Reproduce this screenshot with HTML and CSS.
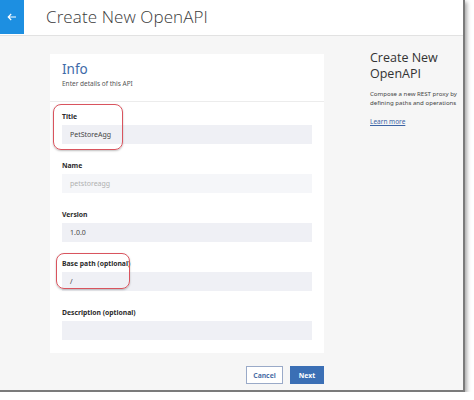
FILE: index.html
```html
<!DOCTYPE html>
<html>
<head>
<meta charset="utf-8">
<link rel="stylesheet" href="styles.css">
</head>
<body>
<div class="window">
  <header class="header">
    <div class="back">
      <svg width="10" height="8" viewBox="0 0 10 8"><path d="M9 4H1.5M4.2 1L1.2 4l3 3" fill="none" stroke="#fff" stroke-width="1.1"/></svg>
    </div>
    <h1 class="page-title">Create New OpenAPI</h1>
  </header>
  <main class="main">
    <section class="left">
      <div class="card">
        <div class="card-head">
          <h2 class="card-title">Info</h2>
          <p class="card-sub">Enter details of this API</p>
        </div>
        <div class="card-body">
          <div class="field">
            <label class="label">Title</label>
            <div class="input">PetStoreAgg</div>
            <span class="mark mark-title"></span>
          </div>
          <div class="field">
            <label class="label">Name</label>
            <div class="input input-disabled">petstoreagg</div>
          </div>
          <div class="field">
            <label class="label">Version</label>
            <div class="input">1.0.0</div>
          </div>
          <div class="field">
            <label class="label">Base path (optional)</label>
            <div class="input">/</div>
            <span class="mark mark-base"></span>
          </div>
          <div class="field">
            <label class="label">Description (optional)</label>
            <div class="input"></div>
          </div>
        </div>
      </div>
      <div class="actions">
        <button class="btn btn-secondary">Cancel</button>
        <button class="btn btn-primary">Next</button>
      </div>
    </section>
    <aside class="side">
      <h3 class="side-title">Create New OpenAPI</h3>
      <p class="side-text">Compose a new REST proxy by defining paths and operations</p>
      <a class="side-link">Learn more</a>
    </aside>
  </main>
</div>
</body>
</html>
```

FILE: styles.css
```css
* { box-sizing: border-box; }
html, body { margin: 0; padding: 0; background: #fff; }
body { font-family: "Noto Sans", "Open Sans", sans-serif; color: #333; }

.window {
  width: 465px;
  height: 392px;
  background: #f6f6f6;
  border-right: 2px solid #7b7b7b;
  border-bottom: 2px solid #7b7b7b;
  box-shadow: 2px 2px 4px rgba(0,0,0,0.35);
  display: flex;
  flex-direction: column;
  overflow: hidden;
}

.header {
  height: 36px;
  flex: none;
  background: #fff;
  border-bottom: 1px solid #e2e2e2;
  display: flex;
  align-items: stretch;
}
.back {
  width: 24px;
  background: #1d8fe1;
  display: flex;
  align-items: center;
  justify-content: center;
  margin-bottom: 1px;
}
.page-title {
  margin: 0 0 0 22px;
  align-self: center;
  font-family: "Open Sans", sans-serif;
  font-weight: 300;
  font-size: 17px;
  color: #3a3a3a;
  letter-spacing: 0.1px;
  padding-bottom: 3px;
}

.main {
  display: flex;
  padding: 18px 0 0 50px;
}
.left { width: 274px; flex: none; }
.card { background: #fff; }
.card-head {
  height: 48px;
  padding: 6px 12px 0;
  border-bottom: 1px solid #ececec;
}
.card-title {
  margin: 0;
  font-weight: 400;
  font-size: 13.5px;
  line-height: 18px;
  color: #3e6aa8;
}
.card-sub {
  margin: 1px 0 0;
  font-size: 6.5px;
  color: #555;
}
.card-body { padding: 10px 12px 13px; }
.field { position: relative; margin-bottom: 17px; }
.field:last-child { margin-bottom: 0; }
.label {
  display: block;
  font-size: 6.8px;
  font-weight: 700;
  line-height: 10px;
  color: #2b2b2b;
  margin-bottom: 3px;
}
.input {
  height: 19px;
  background: #eff0f5;
  padding-left: 8px;
  font-size: 7px;
  line-height: 19px;
  color: #444;
}
.input-disabled { background: #f5f6f9; color: #b0b0b0; }

.mark {
  position: absolute;
  border: 1.5px solid #d9545e;
  border-radius: 8px;
  box-shadow: 0 1px 2px rgba(0,0,0,0.25);
  pointer-events: none;
}
.mark-title { left: -9px; top: -8px; width: 70px; height: 46px; }
.mark-base { left: -6px; top: -6px; width: 74px; height: 36px; }

.actions {
  display: flex;
  justify-content: flex-end;
  gap: 7px;
  margin-top: 13px;
}
.btn {
  height: 18px;
  font-family: "Noto Sans", sans-serif;
  font-size: 6.8px;
  font-weight: 700;
  padding: 0;
  border-radius: 0;
}
.btn-secondary {
  width: 37px;
  background: #fff;
  color: #4d6fa6;
  border: 1px solid #9aaac8;
}
.btn-primary {
  width: 34px;
  background: #3b6fb5;
  color: #fff;
  border: 1px solid #3b6fb5;
}

.side {
  width: 96px;
  margin-left: 46px;
  margin-top: -4px;
}
.side-title {
  margin: 0;
  font-family: "Open Sans", sans-serif;
  font-weight: 400;
  font-size: 12.5px;
  line-height: 16px;
  color: #333;
}
.side-text {
  margin: 7px 0 0;
  font-size: 6.1px;
  line-height: 9px;
  color: #444;
}
.side-link {
  display: inline-block;
  margin-top: 5px;
  font-size: 6.5px;
  color: #3c64a5;
  text-decoration: underline;
}
```
